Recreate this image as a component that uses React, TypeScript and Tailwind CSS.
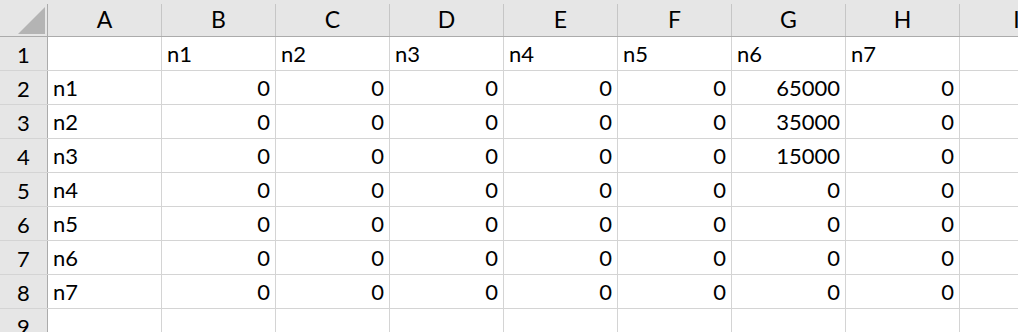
const cols = ["A", "B", "C", "D", "E", "F", "G", "H", "I"];

const rows: (string | number | null)[][] = [
  [null, "n1", "n2", "n3", "n4", "n5", "n6", "n7", null],
  ["n1", 0, 0, 0, 0, 0, 65000, 0, null],
  ["n2", 0, 0, 0, 0, 0, 35000, 0, null],
  ["n3", 0, 0, 0, 0, 0, 15000, 0, null],
  ["n4", 0, 0, 0, 0, 0, 0, 0, null],
  ["n5", 0, 0, 0, 0, 0, 0, 0, null],
  ["n6", 0, 0, 0, 0, 0, 0, 0, null],
  ["n7", 0, 0, 0, 0, 0, 0, 0, null],
  [null, null, null, null, null, null, null, null, null],
];

const Cell = ({ value }: { value: string | number | null }) => {
  const isNum = typeof value === "number";
  return (
    <div
      className={`w-[114px] shrink-0 h-full border-r border-[#d4d4d4] flex items-end pb-[5px] px-[5px] ${
        isNum ? "justify-end" : "justify-start"
      }`}
    >
      {value !== null && <span className="leading-none">{value}</span>}
    </div>
  );
};

export default function App() {
  return (
    <div
      className="w-[1018px] h-[332px] overflow-hidden bg-white text-black text-[22px]"
      style={{ fontFamily: "Lato, 'Open Sans', sans-serif" }}
    >
      {/* column headers */}
      <div className="flex h-[37px] bg-[#e6e6e6] border-b border-[#ababab]">
        <div className="w-[48px] shrink-0 h-full pt-1">
          <div className="h-full border-r border-[#ababab] relative">
            <svg className="absolute left-[18px] top-[3px]" width="27" height="27" viewBox="0 0 27 27">
              <polygon points="27,0 27,27 0,27" fill="#b4b4b4" />
            </svg>
          </div>
        </div>
        {cols.map((c) => (
          <div key={c} className="w-[114px] shrink-0 h-full pt-1">
            <div className="h-full border-r border-[#c6c6c6] flex items-center justify-center leading-none text-[23px] pb-[2px]">
              {c}
            </div>
          </div>
        ))}
      </div>

      {/* rows */}
      {rows.map((r, i) => (
        <div key={i} className="flex h-[34px] border-b border-[#d4d4d4]">
          <div className="w-[48px] shrink-0 h-full bg-[#e6e6e6] border-r border-[#ababab] flex items-center justify-center leading-none pt-[2px]">
            {i + 1}
          </div>
          {r.map((v, j) => (
            <Cell key={j} value={v} />
          ))}
        </div>
      ))}
    </div>
  );
}
